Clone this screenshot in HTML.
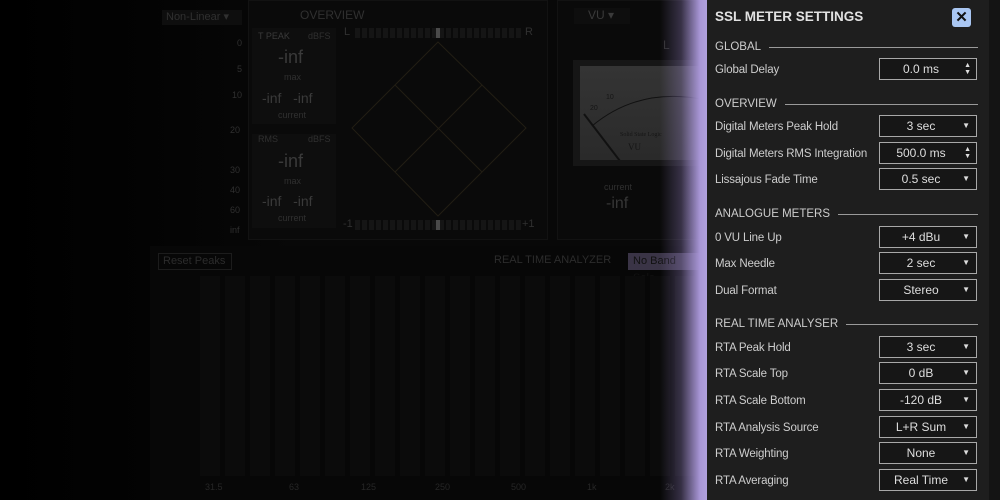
<!DOCTYPE html>
<html><head><style>
*{margin:0;padding:0;box-sizing:border-box}
body{width:1000px;height:500px;overflow:hidden;background:#080808;font-family:"Liberation Sans",sans-serif;position:relative}
.abs{position:absolute}
.dim{color:#303030}
#panel{position:absolute;left:707px;top:0;width:282px;height:500px;background:#1e1e1e;color:#cfcfcf}
.lbl{position:absolute;left:8px;font-size:11.5px;letter-spacing:-0.15px;color:#cdcdcd;margin-top:2px}
.sec{position:absolute;left:8px;right:11px;font-size:11.5px;color:#cdcdcd;display:flex;align-items:center;margin-top:1px}
.sec:after{content:"";flex:1;height:1px;background:#9a9a9a;margin-left:8px}
.box{position:absolute;left:172px;width:98px;height:22px;border:1px solid #a8a8a8;background:#161616;font-size:12px;color:#dedede;text-align:center;line-height:20px;padding-right:14px}
.box .ar{position:absolute;right:6px;top:0;font-size:8px;color:#ddd}
.box .sp{position:absolute;right:5px;top:3px;font-size:7px;line-height:7px;color:#ddd}
</style></head><body>
<div class="abs" style="left:0;top:0;width:700px;height:500px;background:linear-gradient(90deg,#000 0,#030303 150px,#080808 300px,#080808 700px)"></div>
<div class="abs" style="left:248px;top:0;width:300px;height:240px;background:#0a0a0a;border:1px solid #121212"></div>
<div class="abs dim" style="left:300px;top:8px;font-size:12px">OVERVIEW</div>
<div class="abs dim" style="left:162px;top:10px;font-size:11px;background:#0e0e0e;width:80px;height:15px;padding-left:4px">Non-Linear ▾</div>
<div class="abs dim" style="left:230px;top:30px;font-size:9px;line-height:26px;text-align:right;width:12px">0<br>5<br>10</div>
<div class="abs dim" style="left:230px;top:120px;font-size:9px;line-height:20px;width:12px">20<br><br>30<br>40<br>60<br>inf</div>
<div class="abs" style="left:252px;top:28px;width:84px;height:96px;background:#0e0e0e"></div>
<div class="abs" style="left:252px;top:134px;width:84px;height:94px;background:#0e0e0e"></div>
<div class="abs dim" style="left:258px;top:31px;font-size:9px;color:#3a3a3a">T PEAK</div>
<div class="abs dim" style="left:308px;top:31px;font-size:9px">dBFS</div>
<div class="abs" style="left:278px;top:47px;font-size:18px;color:#3a3a3a">-inf</div>
<div class="abs dim" style="left:284px;top:72px;font-size:9px">max</div>
<div class="abs" style="left:262px;top:90px;font-size:14px;color:#3a3a3a">-inf &nbsp;&nbsp;-inf</div>
<div class="abs dim" style="left:278px;top:110px;font-size:9px">current</div>
<div class="abs dim" style="left:258px;top:134px;font-size:9px">RMS</div>
<div class="abs dim" style="left:308px;top:134px;font-size:9px">dBFS</div>
<div class="abs" style="left:278px;top:151px;font-size:18px;color:#3a3a3a">-inf</div>
<div class="abs dim" style="left:284px;top:176px;font-size:9px">max</div>
<div class="abs" style="left:262px;top:193px;font-size:14px;color:#3a3a3a">-inf &nbsp;&nbsp;-inf</div>
<div class="abs dim" style="left:278px;top:213px;font-size:9px">current</div>
<div class="abs dim" style="left:344px;top:26px;font-size:11px">L</div><div class="abs dim" style="left:525px;top:26px;font-size:11px">R</div>
<div class="abs" style="left:355px;top:28px;width:166px;height:10px;background:repeating-linear-gradient(90deg,#151515 0 5px,#0a0a0a 5px 7px)"></div>
<div class="abs" style="left:436px;top:28px;width:4px;height:10px;background:#4a4a4a"></div>
<div class="abs" style="left:355px;top:220px;width:166px;height:10px;background:repeating-linear-gradient(90deg,#151515 0 5px,#0a0a0a 5px 7px)"></div>
<div class="abs" style="left:436px;top:220px;width:4px;height:10px;background:#4a4a4a"></div>
<div class="abs dim" style="left:343px;top:218px;font-size:11px">-1</div><div class="abs dim" style="left:522px;top:218px;font-size:11px">+1</div>
<svg class="abs" style="left:350px;top:40px" width="180" height="180"><g stroke="#221e14" fill="none"><path d="M88 2L176 88L88 176L2 88Z"/><path d="M45 45L132 132M132 45L45 132"/></g></svg>
<div class="abs" style="left:557px;top:0;width:150px;height:240px;background:#0a0a0a;border:1px solid #121212"></div>
<div class="abs dim" style="left:574px;top:8px;width:56px;height:16px;background:#0e0e0e;font-size:12px;padding-left:14px;color:#3a3a3a">VU ▾</div>
<div class="abs dim" style="left:663px;top:38px;font-size:12px">L</div>
<div class="abs" style="left:573px;top:60px;width:130px;height:106px;background:#161616"></div>
<div class="abs" style="left:580px;top:66px;width:126px;height:94px;background:linear-gradient(#343434,#2a2a2a)"></div>
<svg class="abs" style="left:580px;top:66px" width="126" height="94"><g stroke="#111" fill="none"><path d="M12 60Q60 20 126 34"/><path d="M4 48L40 95" stroke-width="2"/></g><text x="48" y="84" font-size="9" fill="#151515" font-family="Liberation Serif">VU</text><text x="40" y="70" font-size="6" fill="#151515" font-family="Liberation Serif">Solid State Logic</text><text x="10" y="44" font-size="7" fill="#151515">20</text><text x="26" y="33" font-size="7" fill="#151515">10</text></svg>
<div class="abs dim" style="left:604px;top:182px;font-size:9px">current</div>
<div class="abs" style="left:606px;top:195px;font-size:16px;color:#363636">-inf</div>
<div class="abs" style="left:150px;top:246px;width:550px;height:254px;background:#070707"></div>
<div class="abs dim" style="left:158px;top:253px;width:74px;height:17px;border:1px solid #1c1c1c;font-size:11px;padding-left:4px;line-height:15px;color:#2c2c2c">Reset Peaks</div>
<div class="abs dim" style="left:494px;top:254px;font-size:11px;color:#2c2c2c">REAL TIME ANALYZER</div>
<div class="abs" style="left:628px;top:253px;width:72px;height:17px;background:#3a3446;font-size:11px;padding-left:5px;line-height:17px;color:#111">No Band Sele</div>
<div class="abs" style="left:200px;top:276px;width:500px;height:200px;background:repeating-linear-gradient(90deg,#0b0b0b 0 20px,#070707 20px 25px)"></div>
<div class="abs dim" style="left:205px;top:482px;font-size:9px;width:500px;color:#262626"><span class="abs" style="left:0">31.5</span><span class="abs" style="left:84px">63</span><span class="abs" style="left:156px">125</span><span class="abs" style="left:230px">250</span><span class="abs" style="left:306px">500</span><span class="abs" style="left:382px">1k</span><span class="abs" style="left:460px">2k</span></div>
<div class="abs" style="left:660px;top:0;width:47px;height:500px;background:linear-gradient(90deg,rgba(160,140,210,0) 0,rgba(160,140,210,.3) 45%,#a896d6 85%,#b0a0dc 100%)"></div>
<div class="abs" style="left:989px;top:0;width:11px;height:500px;background:#141414"></div>
<div id="panel">
<div class="abs" style="left:8px;top:9px;font-size:13.5px;font-weight:bold;color:#e2e2e2">SSL METER SETTINGS</div>
<div class="abs" style="left:245px;top:8px;width:19px;height:19px;background:#a9c6f2;border-radius:3px;color:#111;font-size:15px;font-weight:bold;text-align:center;line-height:19px">✕</div>
<div class="sec" style="top:40px">GLOBAL</div>
<div class="lbl" style="top:62px">Global Delay</div><div class="box" style="top:58px">0.0 ms<span class="sp">▲<br>▼</span></div>
<div class="sec" style="top:97px">OVERVIEW</div>
<div class="lbl" style="top:119px">Digital Meters Peak Hold</div><div class="box" style="top:115px">3 sec<span class="ar">▼</span></div>
<div class="lbl" style="top:146px">Digital Meters RMS Integration</div><div class="box" style="top:142px">500.0 ms<span class="sp">▲<br>▼</span></div>
<div class="lbl" style="top:172px">Lissajous Fade Time</div><div class="box" style="top:168px">0.5 sec<span class="ar">▼</span></div>
<div class="sec" style="top:207px">ANALOGUE METERS</div>
<div class="lbl" style="top:230px">0 VU Line Up</div><div class="box" style="top:226px">+4 dBu<span class="ar">▼</span></div>
<div class="lbl" style="top:256px">Max Needle</div><div class="box" style="top:252px">2 sec<span class="ar">▼</span></div>
<div class="lbl" style="top:283px">Dual Format</div><div class="box" style="top:279px">Stereo<span class="ar">▼</span></div>
<div class="sec" style="top:317px">REAL TIME ANALYSER</div>
<div class="lbl" style="top:340px">RTA Peak Hold</div><div class="box" style="top:336px">3 sec<span class="ar">▼</span></div>
<div class="lbl" style="top:366px">RTA Scale Top</div><div class="box" style="top:362px">0 dB<span class="ar">▼</span></div>
<div class="lbl" style="top:393px">RTA Scale Bottom</div><div class="box" style="top:389px">-120 dB<span class="ar">▼</span></div>
<div class="lbl" style="top:420px">RTA Analysis Source</div><div class="box" style="top:416px">L+R Sum<span class="ar">▼</span></div>
<div class="lbl" style="top:446px">RTA Weighting</div><div class="box" style="top:442px">None<span class="ar">▼</span></div>
<div class="lbl" style="top:473px">RTA Averaging</div><div class="box" style="top:469px">Real Time<span class="ar">▼</span></div>
</div>
</body></html>
